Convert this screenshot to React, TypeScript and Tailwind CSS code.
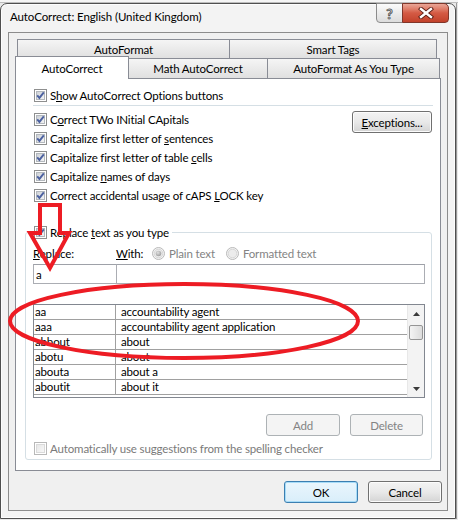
import React from 'react';

const entries: [string, string][] = [
  ['aa', 'accountability agent'],
  ['aaa', 'accountability agent application'],
  ['abbout', 'about'],
  ['abotu', 'about'],
  ['abouta', 'about a'],
  ['aboutit', 'about it'],
];

// shared gradients for the little win7 controls
function Defs() {
  return (
    <svg width="0" height="0" className="absolute">
      <defs>
        <linearGradient id="cbFill" x1="0" y1="0" x2="1" y2="1">
          <stop offset="0" stopColor="#cbcfd5" />
          <stop offset="1" stopColor="#f6f6f6" />
        </linearGradient>
        <linearGradient id="cbOff" x1="0" y1="0" x2="1" y2="1">
          <stop offset="0" stopColor="#e6e6e6" />
          <stop offset="1" stopColor="#f8f8f8" />
        </linearGradient>
        <radialGradient id="radioDot" cx="0.4" cy="0.35" r="0.7">
          <stop offset="0" stopColor="#e2e2e2" />
          <stop offset="1" stopColor="#9a9a9a" />
        </radialGradient>
      </defs>
    </svg>
  );
}

function CheckBox({ checked = true, disabled = false }: { checked?: boolean; disabled?: boolean }) {
  return (
    <svg width="13" height="13" viewBox="0 0 13 13" className="shrink-0">
      <rect x="0.5" y="0.5" width="12" height="12" fill="#fff" stroke={disabled ? '#b8b8b8' : '#8e8f8f'} />
      <rect x="2.5" y="2.5" width="8" height="8" fill={disabled ? 'url(#cbOff)' : 'url(#cbFill)'} stroke={disabled ? '#dadada' : '#b3b8bd'} />
      {checked && (
        <path d="M3.2 6.4 L5.4 8.9 L9.8 3.4" fill="none" stroke="#4c61a0" strokeWidth="1.9" />
      )}
    </svg>
  );
}

function Radio({ checked = false }: { checked?: boolean }) {
  return (
    <svg width="13" height="13" viewBox="0 0 13 13" className="shrink-0">
      <circle cx="6.5" cy="6.5" r="6" fill="#f4f4f4" stroke="#b9b9b9" />
      <circle cx="6.5" cy="6.5" r="4.3" fill="#ececec" stroke="#d6d6d6" />
      {checked && <circle cx="6.5" cy="6.5" r="2.8" fill="url(#radioDot)" />}
    </svg>
  );
}

function Button({ children, width, disabled, primary }: { children: React.ReactNode; width: string; disabled?: boolean; primary?: boolean }) {
  return (
    <div
      className={
        width +
        ' h-[22px] flex items-center justify-center rounded-[3px] border ' +
        (disabled
          ? 'border-[#adb2b5] bg-[#f4f4f4] text-[#838383]'
          : primary
            ? 'border-[#3c7fb1] bg-linear-to-b from-[#eaf6fd] to-[#d9eefa] shadow-[inset_0_0_0_1px_#a7dcf8]'
            : 'border-[#707070] bg-linear-to-b from-[#f3f3f3] via-[#e9e9e9] to-[#d4d4d4] shadow-[inset_0_0_0_1px_#fcfcfc]')
      }
    >
      {children}
    </div>
  );
}

function Option({ label, disabled }: { label: React.ReactNode; disabled?: boolean }) {
  return (
    <div className="h-[19px] flex items-center gap-[3px]">
      <CheckBox checked={!disabled} disabled={disabled} />
      <span className={disabled ? 'text-[#7a7a7a]' : ''}>{label}</span>
    </div>
  );
}

function Tab({ children, className }: { children: React.ReactNode; className: string }) {
  return (
    <div className={className + ' flex items-center justify-center border border-b-0 border-[#898c95] bg-linear-to-b from-[#f5f5f5] to-[#e0e0e0]'}>
      {children}
    </div>
  );
}

export default function App() {
  return (
    <div className="relative w-[458px] h-[520px] overflow-hidden bg-[#e9e9e9] font-['Lato','Liberation_Sans',sans-serif] text-[11.5px] tracking-[-0.15px] leading-[15px] text-black">
      <Defs />

      {/* bottom edge of the options window underneath */}
      <div className="h-[3px] bg-[#f5f5f5] border-b border-[#bdbdbd]" />

      <div className="flex">
        <div className="w-[456px] h-[516px] flex flex-col rounded-t-[7px] border border-[#4f4f4f] bg-[#f3f3f3] shadow-[inset_0_0_0_1px_#fdfdfd]">
          {/* caption */}
          <div className="h-[28px] flex items-start justify-between">
            <span className="pl-[9px] pt-[5px] text-[11.5px] tracking-[-0.1px]">AutoCorrect: English (United Kingdom)</span>
            <div className="flex -mt-px mr-[6px]">
              <div className="w-[27px] h-[20px] flex items-center justify-center rounded-bl-[4px] border border-[#8b8b8b] bg-linear-to-b from-[#fbfbfb] to-[#dcdcdc] text-[14px] font-bold text-white [-webkit-text-stroke:0.9px_#555]">
                ?
              </div>
              <div className="w-[47px] h-[20px] -ml-px flex items-center justify-center rounded-br-[4px] rounded-tr-[5px] border border-[#80362a] bg-linear-to-b from-[#e9a697] via-[#d45a44] to-[#c2412a]">
                <svg width="16" height="12" viewBox="0 0 16 12">
                  <path d="M3 2 L13 10 M13 2 L3 10" stroke="#5a1d14" strokeWidth="4.2" strokeLinecap="square" />
                  <path d="M3 2 L13 10 M13 2 L3 10" stroke="#fff" strokeWidth="2.4" strokeLinecap="square" />
                </svg>
              </div>
            </div>
          </div>

          {/* client area */}
          <div className="mx-[7px] mb-[7px] flex-1 flex flex-col border border-[#8c8c8c] bg-[#f0f0f0] px-[6px] pt-[6px]">
            <div className="flex pl-[2px] h-[19px]">
              <Tab className="w-[213px]">AutoFormat</Tab>
              <Tab className="w-[208px] -ml-px">Smart Tags</Tab>
            </div>
            <div className="relative z-10 flex items-end h-[22px] -mt-[2px]">
              <div className="w-[114px] h-[23px] -mb-px flex items-center justify-center border border-b-0 border-[#898c95] bg-white">
                AutoCorrect
              </div>
              <Tab className="w-[140px] h-[20px] -ml-px">Math AutoCorrect</Tab>
              <Tab className="w-[173px] h-[20px] -ml-px">AutoFormat As You Type</Tab>
            </div>

            {/* AutoCorrect page */}
            <div className="h-[393px] border border-[#898c95] bg-white pl-[18px] pr-[8px] pt-[7px] flex flex-col">
              <Option label={<>S<u>h</u>ow AutoCorrect Options buttons</>} />
              <div className="h-px -ml-px -mr-px bg-[#d5dfe5]" />
              <div className="mt-[4px] flex justify-between">
                <div className="flex flex-col">
                  <Option label={<>C<u>o</u>rrect TWo INitial CApitals</>} />
                  <Option label={<>Capitalize first letter of <u>s</u>entences</>} />
                  <Option label={<>Capitalize first letter of table <u>c</u>ells</>} />
                  <Option label={<>Capitalize <u>n</u>ames of days</>} />
                  <Option label={<>Correct accidental usage of cAPS <u>L</u>OCK key</>} />
                </div>
                <div className="mt-[1px]">
                  <Button width="w-[80px]">
                    <span><u>E</u>xceptions...</span>
                  </Button>
                </div>
              </div>

              <fieldset className="mt-[18px] -ml-[9px] border border-[#d5dfe5] rounded-[3px] pl-[7px] pr-[6px] pb-[3px]">
                <legend className="-ml-[2px] px-[3px] h-[19px] flex items-center gap-[3px] bg-white">
                  <CheckBox />
                  <span>Replace <u>t</u>ext as you type</span>
                </legend>

                <div className="mt-[3px] h-[16px] flex items-center">
                  <span className="w-[83px]"><u>R</u>eplace:</span>
                  <span className="w-[36px]"><u>W</u>ith:</span>
                  <div className="flex items-center gap-[4px] text-[#838383]">
                    <Radio checked />
                    <span>Plain text</span>
                  </div>
                  <div className="ml-[11px] flex items-center gap-[4px] text-[#838383]">
                    <Radio />
                    <span>Formatted text</span>
                  </div>
                </div>

                <div className="mt-[3px] flex h-[20px]">
                  <div className="w-[84px] border border-[#abadb3] border-t-[#9ea1a8] bg-white pl-[2px] flex items-center">a</div>
                  <div className="flex-1 -ml-px border border-[#abadb3] border-t-[#9ea1a8] bg-white" />
                </div>

                {/* replacement list */}
                <div className="mt-[20px] h-[94px] flex border border-[#828790] bg-white">
                  <div className="flex-1 flex flex-col">
                    {entries.map(([from, to]) => (
                      <div key={from} className="h-[15px] flex border-b border-[#a0a0a0] leading-[14px]">
                        <div className="w-[82px] border-r border-[#a0a0a0] pl-[1px]">{from}</div>
                        <div className="pl-[5px] whitespace-nowrap">{to}</div>
                      </div>
                    ))}
                  </div>
                  <div className="w-[17px] flex flex-col bg-[#f3f3f3] border-l border-[#e8e8e8]">
                    <div className="h-[17px] flex items-center justify-center">
                      <svg width="7" height="4" viewBox="0 0 7 4"><path d="M0 4 L3.5 0 L7 4 Z" fill="#3a3a3a" /></svg>
                    </div>
                    <div className="mt-[3px] mx-[1px] h-[15px] rounded-[2px] border border-[#959595] bg-linear-to-r from-[#f4f4f4] to-[#dcdcdc]" />
                    <div className="flex-1" />
                    <div className="h-[17px] flex items-center justify-center">
                      <svg width="7" height="4" viewBox="0 0 7 4"><path d="M0 0 L3.5 4 L7 0 Z" fill="#3a3a3a" /></svg>
                    </div>
                  </div>
                </div>

                <div className="mt-[16px] mr-[2px] flex justify-end gap-[10px]">
                  <Button width="w-[74px]" disabled>Add</Button>
                  <Button width="w-[73px]" disabled>Delete</Button>
                </div>

                <div className="mt-[4px] h-[16px] pl-px flex items-center gap-[3px]">
                  <CheckBox checked={false} disabled />
                  <span className="text-[#7a7a7a]">Automatically use suggestions from the spelling checker</span>
                </div>
              </fieldset>
            </div>

            <div className="mt-[10px] mr-[-1px] flex justify-end gap-[10px]">
              <Button width="w-[74px]" primary>OK</Button>
              <Button width="w-[74px]">Cancel</Button>
            </div>
          </div>
        </div>
        <div className="flex-1 border-l border-[#9a9a9a]" />
      </div>

      {/* red markup drawn over the dialog */}
      <svg className="absolute inset-0 pointer-events-none" width="458" height="520" viewBox="0 0 458 520">
        <path d="M40 205 L60 205 L60 233 L69 233 L50 268 L30 233 L40 233 Z" fill="none" stroke="#ed1c24" strokeWidth="4" strokeLinejoin="miter" />
        <ellipse cx="184" cy="321" rx="174" ry="37" fill="none" stroke="#ed1c24" strokeWidth="4" />
      </svg>
    </div>
  );
}
